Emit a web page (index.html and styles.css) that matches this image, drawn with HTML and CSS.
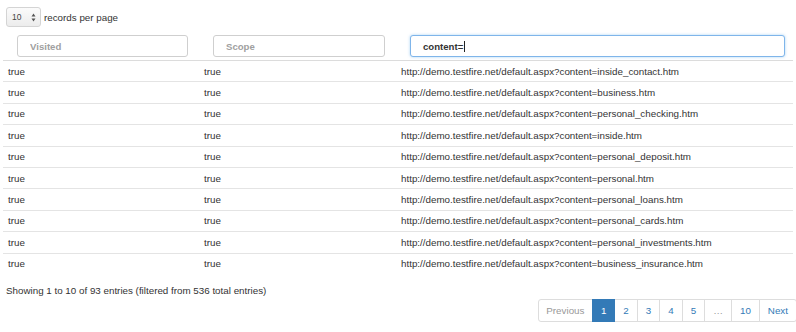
FILE: index.html
```html
<!DOCTYPE html>
<html>
<head>
<meta charset="utf-8">
<link rel="stylesheet" href="styles.css">
</head>
<body>
<div class="page">
  <div class="length">
    <div class="select"><span class="sel-val">10</span><svg class="sel-arrows" width="5" height="9" viewBox="0 0 5 9"><path d="M2.5 0.5 L4.5 3.5 L0.5 3.5 Z M2.5 8.5 L4.5 5.5 L0.5 5.5 Z" fill="#555"/></svg></div>
    <span class="length-label">records per page</span>
  </div>
  <table class="grid">
    <colgroup><col class="c1"><col class="c2"><col class="c3"></colgroup>
    <thead>
      <tr>
        <th><input class="filter f1" placeholder="Visited"></th>
        <th><input class="filter f2" placeholder="Scope"></th>
        <th><div class="filter f3 focused">content=<span class="caret"></span></div></th>
      </tr>
    </thead>
    <tbody>
      <tr><td>true</td><td>true</td><td>http://demo.testfire.net/default.aspx?content=inside_contact.htm</td></tr>
      <tr><td>true</td><td>true</td><td>http://demo.testfire.net/default.aspx?content=business.htm</td></tr>
      <tr><td>true</td><td>true</td><td>http://demo.testfire.net/default.aspx?content=personal_checking.htm</td></tr>
      <tr><td>true</td><td>true</td><td>http://demo.testfire.net/default.aspx?content=inside.htm</td></tr>
      <tr><td>true</td><td>true</td><td>http://demo.testfire.net/default.aspx?content=personal_deposit.htm</td></tr>
      <tr><td>true</td><td>true</td><td>http://demo.testfire.net/default.aspx?content=personal.htm</td></tr>
      <tr><td>true</td><td>true</td><td>http://demo.testfire.net/default.aspx?content=personal_loans.htm</td></tr>
      <tr><td>true</td><td>true</td><td>http://demo.testfire.net/default.aspx?content=personal_cards.htm</td></tr>
      <tr><td>true</td><td>true</td><td>http://demo.testfire.net/default.aspx?content=personal_investments.htm</td></tr>
      <tr><td>true</td><td>true</td><td>http://demo.testfire.net/default.aspx?content=business_insurance.htm</td></tr>
    </tbody>
  </table>
  <div class="info">Showing 1 to 10 of 93 entries (filtered from 536 total entries)</div>
  <div class="pager">
    <ul class="pagination">
      <li class="disabled first"><span>Previous</span></li>
      <li class="active"><span>1</span></li>
      <li><span>2</span></li>
      <li><span>3</span></li>
      <li><span>4</span></li>
      <li><span>5</span></li>
      <li class="disabled"><span>…</span></li>
      <li><span>10</span></li>
      <li class="last"><span>Next</span></li>
    </ul>
  </div>
</div>
</body>
</html>
```

FILE: styles.css
```css
html, body {
  margin: 0;
  padding: 0;
  background: #fff;
}
body {
  font-family: "Liberation Sans", Arial, sans-serif;
  font-size: 9.8px;
  color: #333;
}
.page {
  width: 796px;
  overflow: hidden;
}
.length {
  display: flex;
  align-items: center;
  margin: 7px 0 0 6px;
  height: 20px;
}
.select {
  box-sizing: border-box;
  width: 35px;
  height: 20px;
  border: 1px solid #d4d4d4;
  border-radius: 3px;
  background: linear-gradient(#fbfbfb, #ececec);
  display: flex;
  align-items: center;
  justify-content: space-between;
  padding: 0 4px 0 5px;
  font-size: 8.5px;
  color: #444;
}
.sel-arrows {
  display: block;
}
.length-label {
  margin-left: 3px;
  color: #333;
}
.grid {
  margin: 8px 0 0 3px;
  width: 790px;
  border-collapse: collapse;
  table-layout: fixed;
}
.c1 { width: 196px; }
.c2 { width: 197px; }
.c3 { width: 397px; }
.grid th {
  padding: 0 0 3px 14px;
  border-bottom: 1px solid #dcdcdc;
  text-align: left;
}
.filter {
  box-sizing: border-box;
  display: block;
  height: 22px;
  border: 1px solid #cfcfcf;
  border-radius: 3px;
  padding: 0 0 0 12px;
  font-family: "Liberation Sans", Arial, sans-serif;
  font-size: 9.6px;
  font-weight: bold;
  color: #333;
  background: #fff;
  outline: none;
}
.filter::placeholder {
  color: #a0a0a0;
  font-weight: bold;
}
.f1 { width: 171px; }
.f2 { width: 172px; }
.f3 {
  width: 375px;
  border-color: #7fb5ea;
  box-shadow: 0 0 3px rgba(102, 175, 233, 0.55);
  display: flex;
  align-items: center;
}
.caret {
  display: inline-block;
  width: 1px;
  height: 11px;
  background: #222;
  margin-left: 1px;
}
.grid td {
  height: 21.4px;
  box-sizing: border-box;
  padding: 0 5px;
  border-top: 1px solid #e4e4e4;
  white-space: nowrap;
  color: #333;
}
.grid tbody tr:first-child td {
  border-top: none;
}
.info {
  margin: 11px 0 0 6px;
  height: 12px;
  line-height: 12px;
}
.pager {
  display: flex;
  justify-content: flex-end;
  margin-top: 2px;
}
.pagination {
  list-style: none;
  margin: 0 -1px 0 0;
  padding: 0;
  display: flex;
}
.pagination li span {
  box-sizing: border-box;
  display: flex;
  align-items: center;
  justify-content: center;
  height: 23px;
  padding: 0 8px;
  border: 1px solid #ddd;
  margin-left: -1px;
  color: #337ab7;
  background: #fff;
}
.pagination li.first span {
  border-radius: 3px 0 0 3px;
  margin-left: 0;
  width: 55px;
  color: #888;
}
.pagination li.last span {
  border-radius: 0 3px 3px 0;
}
.pagination li.disabled span {
  color: #999;
}
.pagination li.active span {
  background: #337ab7;
  border-color: #337ab7;
  color: #fff;
  position: relative;
}
```
